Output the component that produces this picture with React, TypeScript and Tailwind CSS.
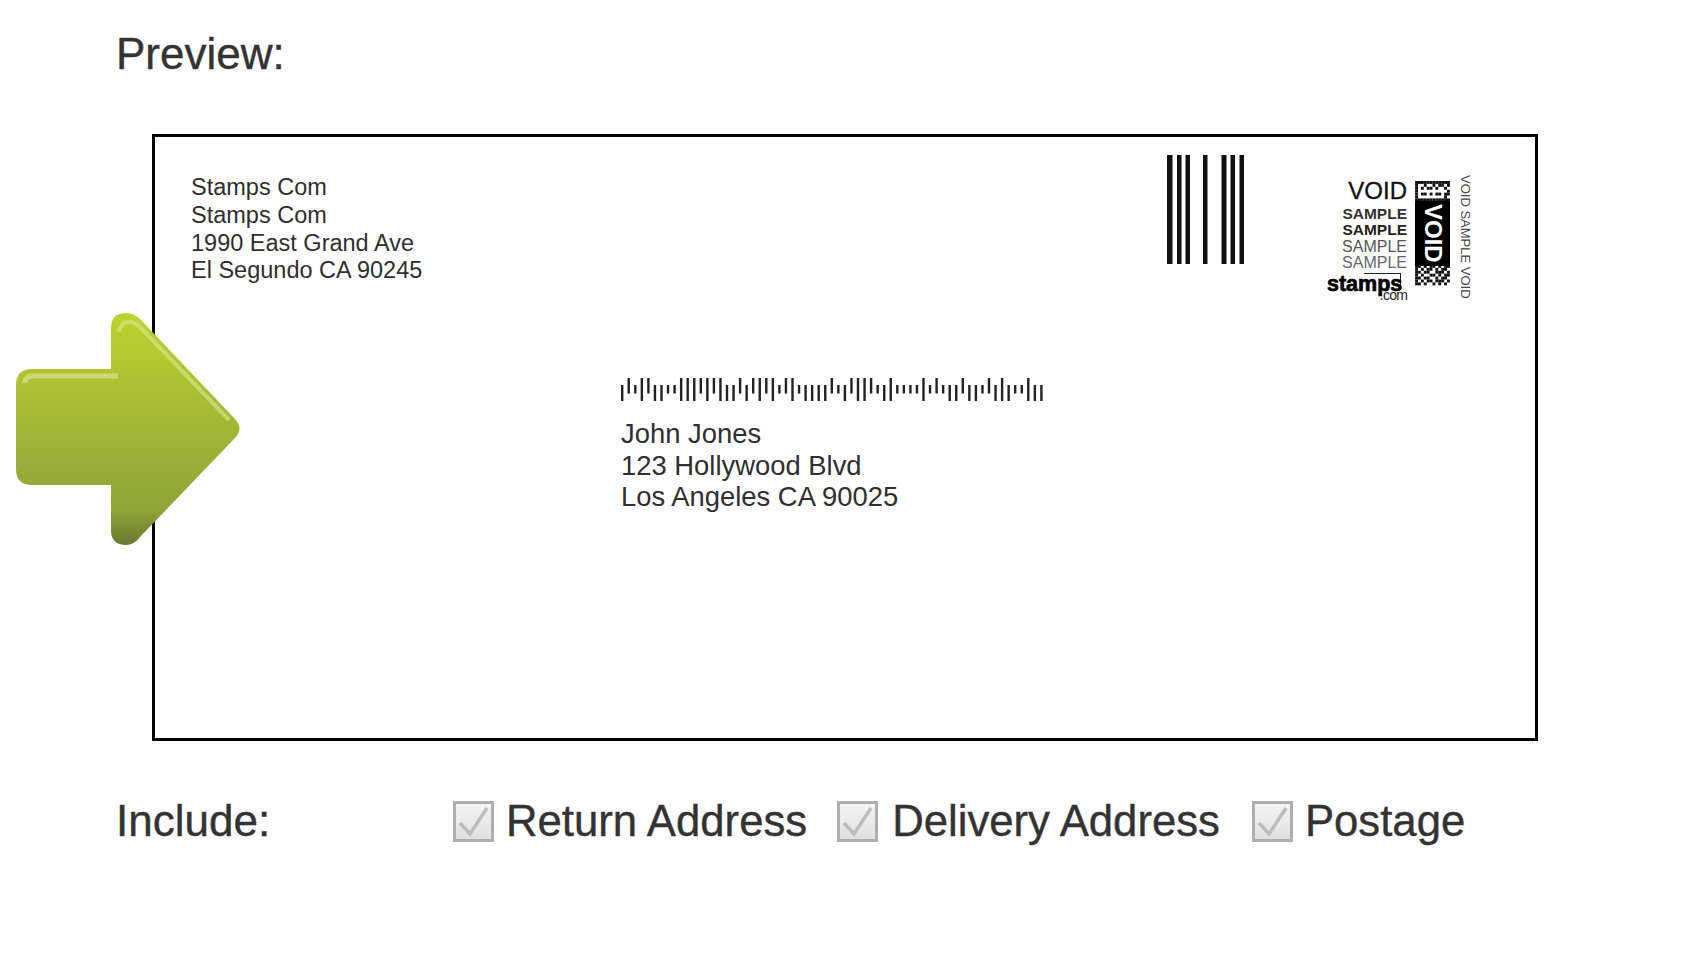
const BARS = 'DATFADDTTFFFAFAFDDADAFAFTAFTDDDDATDAFFATDFTTTTFTATDDADDTADFDTTFDD';

const TOP_CODE = [
  '111111111111',
  '100100101101',
  '101011010010',
  '100000000001',
  '101101011011',
  '100000000010',
  '111111111111',
];

const BOTTOM_CODE = [
  '110101101011',
  '101011010110',
  '110110011101',
  '101001101011',
  '110110010110',
  '101011011101',
  '110100101010',
];

function Barcode() {
  return (
    <svg width="428" height="23" viewBox="0 0 428 23" className="block">
      {BARS.split('').map((b, i) => {
        const y = b === 'F' || b === 'A' ? 0 : 7;
        const bottom = b === 'F' || b === 'D' ? 23 : 15.5;
        return <rect key={i} x={i * 6.55} y={y} width="2.4" height={bottom - y} fill="#222" />;
      })}
    </svg>
  );
}

function FimBars() {
  const bars = [
    [0, 5.5],
    [10, 4.5],
    [18.5, 4.5],
    [36, 4.5],
    [54.5, 5],
    [63.5, 4.5],
    [72.5, 4.5],
  ];
  return (
    <svg width="78" height="109" viewBox="0 0 78 109" className="block">
      {bars.map(([x, w]) => (
        <rect key={x} x={x} y="0" width={w} height="109" fill="#111" />
      ))}
    </svg>
  );
}

function CodeBlock({ rows }: { rows: string[] }) {
  return (
    <svg width="35" height={rows.length * 2.9} viewBox={`0 0 36 ${rows.length * 3}`} className="block">
      {rows.map((row, y) =>
        row.split('').map((c, x) => (c === '1' ? <rect key={`${x}-${y}`} x={x * 3} y={y * 3} width="3" height="3" fill="#111" /> : null))
      )}
    </svg>
  );
}

function GreenArrow() {
  return (
    <svg width="226" height="234" viewBox="0 0 226 234" className="absolute left-[15px] top-[312px]">
      <defs>
        <linearGradient id="arrowFill" x1="0" y1="0" x2="0" y2="1">
          <stop offset="0" stopColor="#c0d42e" />
          <stop offset="0.12" stopColor="#b6cc2e" />
          <stop offset="0.5" stopColor="#a2b636" />
          <stop offset="0.85" stopColor="#8fa438" />
          <stop offset="1" stopColor="#687a2e" />
        </linearGradient>
      </defs>
      <path
        d="M96 16 Q96 1 111 1 Q119 1 125 7 L220 107 Q229 116 220 126 L125 225 Q119 233 111 233 Q96 233 96 218 L96 173 L17 173 Q1 173 1 157 L1 73 Q1 57 17 57 L96 57 Z"
        fill="url(#arrowFill)"
      />
      <path d="M10 71 Q10 64 19 64 L103 64" fill="none" stroke="#dbe79a" strokeOpacity="0.65" strokeWidth="5" />
      <path d="M104 20 Q106 9 116 10 Q121 11 126 16 L214 108" fill="none" stroke="#dbe79a" strokeOpacity="0.6" strokeWidth="4" />
    </svg>
  );
}

function CheckItem({ label, className }: { label: string; className: string }) {
  return (
    <div className={`flex items-center ${className}`}>
      <div className="h-[41px] w-[41px] border-[3px] border-[#aeb0b0] bg-gradient-to-b from-[#f4f4f4] to-[#e0e0e0]">
        <svg width="35" height="35" viewBox="0 0 35 35" className="block">
          <path d="M4 19 L14 30 L31 4" fill="none" stroke="#bcbebe" strokeWidth="3.5" />
        </svg>
      </div>
      <span className="text-[43.7px] leading-[50px] text-[#333] [-webkit-text-stroke:0.4px_#333]">{label}</span>
    </div>
  );
}

export default function App() {
  return (
    <div className="relative h-[954px] w-[1696px] overflow-hidden bg-white font-['Liberation_Sans',Arial,sans-serif]">
      <div className="flex flex-col pl-[116px] pt-[29px]">
        <h1 className="text-[44px] leading-[50px] font-normal text-[#333] [-webkit-text-stroke:0.4px_#333]">Preview:</h1>

        {/* Envelope */}
        <div className="mt-[55px] ml-[36px] h-[607px] w-[1394px] max-w-[1394px] border-[3px] border-black bg-white text-[#2f2f2f]" style={{ width: 1394 - 8 }}>
          <div className="flex items-start pt-[18px] pr-[62px] pl-[36px]">
            <div className="mt-[19px] text-[23.5px] leading-[27.8px]">
              <div>Stamps Com</div>
              <div>Stamps Com</div>
              <div>1990 East Grand Ave</div>
              <div>El Segundo CA 90245</div>
            </div>

            <div className="ml-auto">
              <FimBars />
            </div>

            {/* Postage */}
            <div className="mt-[20px] ml-[82px] flex items-start">
              <div className="flex w-[80px] flex-col items-end text-[#111]">
                <div className="text-[24px] leading-[31px] [-webkit-text-stroke:0.3px_#111]">VOID</div>
                <div className="text-[15.5px] leading-[16.3px] font-bold text-[#333]">SAMPLE</div>
                <div className="text-[15.5px] leading-[16.3px] font-bold text-[#222]">SAMPLE</div>
                <div className="text-[16px] leading-[16.3px] text-[#555]">SAMPLE</div>
                <div className="text-[16px] leading-[16.3px] text-[#666]">SAMPLE</div>
                <div className="relative mt-[5px] h-[24px] w-[80px]">
                  <div className="absolute top-[-3px] right-[6px] h-[17px] w-[37px] border-t border-r border-[#222]" />
                  <span className="absolute top-[1px] left-0 text-[21.5px] leading-[14px] font-bold text-black [-webkit-text-stroke:0.7px_black]">stamps</span>
                  <span className="absolute top-[15px] right-0 text-[14px] leading-[8px] tracking-[-0.8px] text-[#222]">.com</span>
                </div>
              </div>
              <div className="mt-[6px] ml-[8px] flex h-[105px] w-[35px] flex-col">
                <CodeBlock rows={TOP_CODE} />
                <div className="flex h-[65px] items-center justify-center bg-black">
                  <span className="text-[24px] leading-[24px] font-bold text-white [writing-mode:vertical-rl]">VOID</span>
                </div>
                <div className="-mt-[1px]">
                  <CodeBlock rows={BOTTOM_CODE} />
                </div>
              </div>
              <span className="ml-[8px] text-[13px] leading-[15px] text-[#444] [writing-mode:vertical-rl]">VOID SAMPLE VOID</span>
            </div>
          </div>

          {/* Delivery address */}
          <div className="mt-[78px] ml-[466px]">
            <Barcode />
            <div className="mt-[17px] text-[27.4px] leading-[31.5px]">
              <div>John Jones</div>
              <div>123 Hollywood Blvd</div>
              <div>Los Angeles CA 90025</div>
            </div>
          </div>
        </div>

        {/* Include row */}
        <div className="mt-[55px] flex items-center">
          <span className="w-[337px] text-[44px] leading-[50px] text-[#333] [-webkit-text-stroke:0.4px_#333]">Include:</span>
          <div className="flex items-center">
            <CheckItem label="Return Address" className="gap-[12px]" />
            <CheckItem label="Delivery Address" className="ml-[30px] gap-[14px]" />
            <CheckItem label="Postage" className="ml-[32px] gap-[12px]" />
          </div>
        </div>
      </div>

      <GreenArrow />
    </div>
  );
}
